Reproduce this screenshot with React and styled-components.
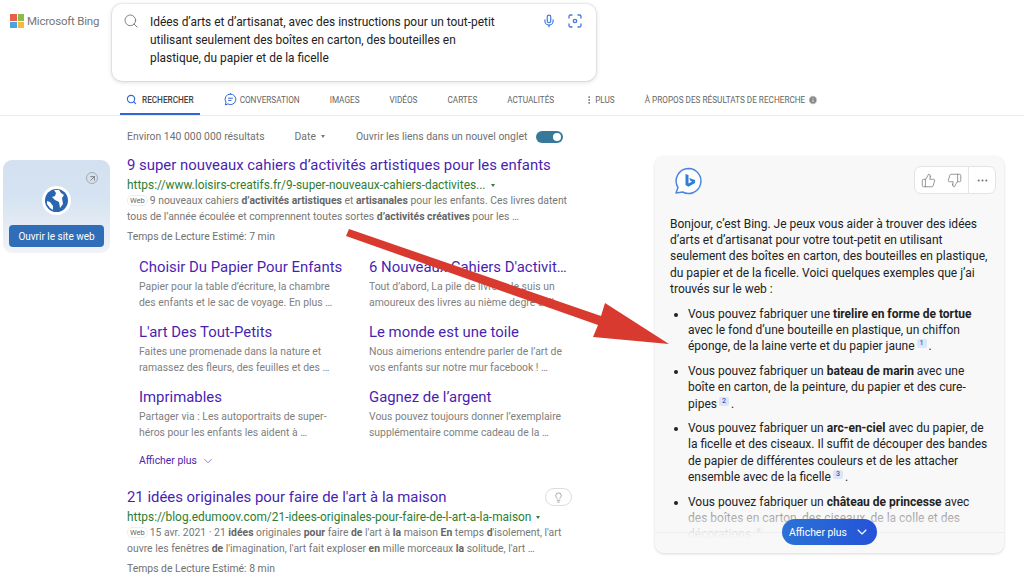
import React from "react";
import styled, { createGlobalStyle } from "styled-components";
import { Search, Mic, ThumbsUp, ThumbsDown, MoreHorizontal, ChevronDown, Lightbulb, Info, ArrowUpRight, MoreVertical } from "lucide-react";

const GlobalStyle = createGlobalStyle`
  html, body { margin: 0; padding: 0; background: #fff; }
  body { font-family: Roboto, "Liberation Sans", sans-serif; width: 1024px; height: 580px; overflow: hidden; }
  b { font-weight: 700; }
`;

const Page = styled.div`
  position: relative;
  width: 1024px;
  height: 580px;
  overflow: hidden;
`;

const Header = styled.header`
  height: 116px;
  box-sizing: border-box;
  border-bottom: 1px solid #ececec;
`;

const TopRow = styled.div`
  display: flex;
  align-items: flex-start;
  padding: 3px 0 0 10px;
`;

const Logo = styled.div`
  display: flex;
  align-items: center;
  gap: 3px;
  width: 102px;
  height: 36px;
  color: #767676;
  font-size: 11.5px;
  letter-spacing: -0.2px;
`;

const LogoGrid = styled.div`
  display: grid;
  grid-template-columns: 6.5px 6.5px;
  grid-template-rows: 6.5px 6.5px;
  gap: 1px;
`;

const LogoCell = styled.span`
  background: ${(p) => p.$color};
`;

const SearchBox = styled.div`
  width: 484px;
  height: 77px;
  margin-top: 1px;
  box-sizing: border-box;
  border-radius: 10px;
  background: #fff;
  box-shadow: 0 0 0 1px rgba(0, 0, 0, 0.05), 0 1px 5px rgba(0, 0, 0, 0.16);
  display: flex;
  padding: 9px 14px 0 11px;
  color: #777;
`;

const Query = styled.div`
  width: 350px;
  margin-left: 11px;
  font-size: 11.9px;
  line-height: 18px;
  color: #222;
`;

const QueryIcons = styled.div`
  display: flex;
  gap: 12px;
  margin-left: auto;
  color: #3f78e0;
  padding-top: 1px;
`;

const Nav = styled.nav`
  display: flex;
  align-items: stretch;
  height: 31px;
  margin-top: 3px;
  padding-left: 120px;
`;

const Tab = styled.div`
  display: flex;
  align-items: center;
  gap: ${(p) => p.$gap || 4}px;
  margin-left: ${(p) => p.$left || 0}px;
  padding: 0 ${(p) => (p.$active ? 6 : 0)}px;
  font-size: 8.2px;
  white-space: nowrap;
  color: ${(p) => (p.$active ? "#444" : "#666")};
  font-weight: ${(p) => (p.$active ? 500 : 400)};
  box-shadow: ${(p) => (p.$active ? "inset 0 -2px 0 #2f66d8" : "none")};
`;

const Body = styled.div`
  display: flex;
`;

const SideCard = styled.aside`
  width: 107px;
  height: 93px;
  margin: 44px 0 0 3px;
  box-sizing: border-box;
  border-radius: 9px;
  position: relative;
  padding-top: 26px;
  background: linear-gradient(#d2e0f0, #d6e3f2 40%, #f0f3f7);
  display: flex;
  flex: none;
  flex-direction: column;
  align-items: center;
`;

const CornerIcon = styled.span`
  position: absolute;
  top: 12px;
  right: 12px;
  width: 12px;
  height: 12px;
  border-radius: 50%;
  border: 1px solid #aaa;
  box-sizing: border-box;
  color: #666;
  display: flex;
  align-items: center;
  justify-content: center;
`;

const Globe = styled.div`
  width: 29px;
  height: 29px;
  border-radius: 50%;
  background: #fff;
  display: flex;
  align-items: center;
  justify-content: center;
`;

const OpenButton = styled.div`
  margin-top: 10px;
  width: 95px;
  height: 22px;
  background: #2f6db8;
  border-radius: 4px;
  color: #fff;
  font-size: 10px;
  display: flex;
  align-items: center;
  justify-content: center;
`;

const Main = styled.main`
  width: 528px;
  margin-left: 17px;
  flex: none;
`;

const Stats = styled.div`
  display: flex;
  align-items: center;
  height: 17px;
  margin-top: 12px;
  font-size: 10.4px;
  color: #707070;
`;

const StatItem = styled.span`
  margin-left: ${(p) => p.$left || 0}px;
`;

const Caret = styled.span`
  display: inline-block;
  margin-left: ${(p) => p.$left || 5}px;
  border-left: 2.5px solid transparent;
  border-right: 2.5px solid transparent;
  border-top: 3px solid ${(p) => p.$color || "#777"};
  vertical-align: middle;
`;

const Toggle = styled.span`
  width: 27px;
  height: 12px;
  margin-left: 9px;
  border-radius: 6px;
  background: #38799b;
  display: flex;
  justify-content: flex-end;
  align-items: center;
  padding-right: 2px;
  box-sizing: border-box;
  &::after {
    content: "";
    width: 8px;
    height: 8px;
    border-radius: 50%;
    background: #fff;
  }
`;

const Result = styled.section`
  margin-top: ${(p) => p.$top}px;
  width: 445px;
  position: relative;
`;

const Title = styled.div`
  font-size: 14.9px;
  line-height: 20px;
  margin-bottom: 2px;
  color: #4a1fb0;
  white-space: nowrap;
`;

const Url = styled.div`
  font-size: 11.9px;
  line-height: 16px;
  color: #2f7d32;
  white-space: nowrap;
`;

const Snippet = styled.div`
  font-size: 10.4px;
  line-height: 16px;
  color: #777;
  white-space: nowrap;
  b { color: #666; }
`;

const WebTag = styled.span`
  display: inline-block;
  font-size: 7.5px;
  line-height: 9px;
  padding: 0 2px;
  margin-right: 2px;
  color: #666;
  border: 1px solid #eee;
  border-radius: 5px;
  vertical-align: 1px;
`;

const ReadTime = styled.div`
  font-size: 10.4px;
  line-height: 20px;
  margin-top: 2px;
  color: #717171;
`;

const SubGrid = styled.div`
  display: grid;
  grid-template-columns: 230px 210px;
  grid-auto-rows: 65px;
  margin: 10px 0 0 12px;
`;

const SubTitle = styled.div`
  font-size: 14.9px;
  line-height: 20px;
  color: #4a1fb0;
  white-space: nowrap;
`;

const SubText = styled.div`
  font-size: 10.4px;
  line-height: 16px;
  margin-top: 2px;
  color: #808080;
  white-space: pre;
`;

const MoreLink = styled.div`
  margin: -1px 0 0 12px;
  font-size: 10.4px;
  line-height: 20px;
  display: flex;
  align-items: center;
  gap: 4px;
  color: #4a1fb0;
  svg { color: #7a78c4; }
`;

const BulbPill = styled.span`
  position: absolute;
  top: 1px;
  right: 0;
  width: 27px;
  height: 18px;
  border: 1px solid #ddd;
  border-radius: 9px;
  box-sizing: border-box;
  color: #777;
  display: flex;
  align-items: center;
  justify-content: center;
`;

const ChatPanel = styled.aside`
  position: relative;
  flex: none;
  width: 349px;
  height: 397px;
  margin: 40px 0 0 0;
  box-sizing: border-box;
  padding: 10px 15px 0;
  background: #f8f8f8;
  border-radius: 9px;
  box-shadow: 0 1px 3px rgba(0, 0, 0, 0.16);
  overflow: hidden;
`;

const ChatTop = styled.div`
  display: flex;
  justify-content: space-between;
  align-items: flex-start;
`;

const BingSlot = styled.div`
  margin-left: 3px;
  height: 30px;
`;

const Feedback = styled.div`
  display: flex;
  align-items: center;
  width: 82px;
  height: 28px;
  margin-right: -7px;
  box-sizing: border-box;
  border: 1px solid #e4e4e4;
  border-radius: 7px;
  background: #fff;
  color: #777;
`;

const FeedbackPart = styled.div`
  display: flex;
  align-items: center;
  justify-content: center;
  gap: 11px;
  height: 100%;
  flex: ${(p) => (p.$line ? 1 : "none")};
  width: ${(p) => (p.$line ? "auto" : "53px")};
  border-left: ${(p) => (p.$line ? "1px solid #e4e4e4" : "none")};
`;

const ChatBody = styled.div`
  margin-top: 20px;
  font-size: 12px;
  line-height: 16.2px;
  color: #222;
`;

const Bullets = styled.ul`
  margin: 9px 0 0;
  padding: 0 0 0 18px;
`;

const Bullet = styled.li`
  margin-bottom: 8.5px;
`;

const Ref = styled.sup`
  display: inline-block;
  font-size: 7px;
  font-weight: 500;
  line-height: 9px;
  padding: 0 3px;
  margin: 0 2px;
  color: #2f5fc0;
  background: #dde6f7;
  border-radius: 2px;
  vertical-align: 5px;
`;

const Fade = styled.div`
  position: absolute;
  left: 0;
  right: 0;
  bottom: 0;
  height: 46px;
  background: linear-gradient(rgba(248, 248, 248, 0.45), rgba(248, 248, 248, 0.9) 55%, #f8f8f8 70%);
  &::after {
    content: "";
    position: absolute;
    left: 0;
    right: 0;
    top: 25px;
    border-top: 1px solid #eee;
  }
`;

const ShowMore = styled.div`
  position: absolute;
  z-index: 1;
  left: 127px;
  bottom: 8px;
  width: 95px;
  height: 26px;
  border-radius: 13px;
  background: linear-gradient(90deg, #2c72d6, #2453d8);
  color: #fff;
  font-size: 10.4px;
  display: flex;
  align-items: center;
  justify-content: center;
  gap: 7px;
`;

const ArrowLayer = styled.svg`
  position: absolute;
  left: 0;
  top: 0;
  pointer-events: none;
`;

const subLinks = [
  ["Choisir Du Papier Pour Enfants", "Papier pour la table d’écriture, la chambre\ndes enfants et le sac de voyage. En plus …"],
  ["6 Nouveaux Cahiers D'activit…", "Tout d’abord, La pile de livres. Je suis un\namoureux des livres au nième degré et j’…"],
  ["L'art Des Tout-Petits", "Faites une promenade dans la nature et\nramassez des fleurs, des feuilles et des …"],
  ["Le monde est une toile", "Nous aimerions entendre parler de l’art de\nvos enfants sur notre mur facebook ! …"],
  ["Imprimables", "Partager via : Les autoportraits de super-\nhéros pour les enfants les aident à …"],
  ["Gagnez de l’argent", "Vous pouvez toujours donner l’exemplaire\nsupplémentaire comme cadeau de la …"],
];

const logoColors = ["#e8604a", "#8dbb4a", "#4aa3e0", "#f2bb3d"];

function ScanIcon() {
  return (
    <svg width="14" height="14" viewBox="0 0 14 14" fill="none" stroke="currentColor" strokeWidth="1.3" strokeLinecap="round">
      <path d="M1 4V2.500A1.500 1.500 0 0 1 2.500 1H4M10 1h1.500A1.500 1.500 0 0 1 13 2.500V4M13 10v1.500a1.500 1.500 0 0 1-1.500 1.500H10M4 13H2.500A1.500 1.500 0 0 1 1 11.500V10" />
      <circle cx="7" cy="7" r="1.700" />
    </svg>
  );
}

function ChatIcon() {
  return (
    <svg width="13" height="13" viewBox="0 0 13 13" fill="none" stroke="#2f66d8" strokeWidth="1" strokeLinecap="round">
      <path d="M6.500 1a5.300 5.300 0 1 1-2.600 9.900L1.300 12l.7-2.700A5.300 5.300 0 0 1 6.500 1z" />
      <path d="M4.500 5.200h4M4.500 7.400h2.600" />
    </svg>
  );
}

function BingMark() {
  return (
    <svg width="30" height="30" viewBox="0 0 30 30" fill="none">
      <path d="M15.500 2.500a12.500 12.500 0 1 1-6 23.500l-6.500 1 2-5.500A12.500 12.500 0 0 1 15.500 2.500z" fill="#fff" stroke="#4a86e0" strokeWidth="1.500" strokeLinejoin="round" />
      <path d="M12.500 8l3 1v8.500l3.500-2-1.800-.9-1-2.600 5.800 2.100v2.900l-6.500 3.800-3-1.800z" fill="#2f7fd8" />
    </svg>
  );
}

function GlobeIcon() {
  return (
    <svg width="23" height="23" viewBox="0 0 23 23">
      <circle cx="11.500" cy="11.500" r="11.500" fill="#2a66b0" />
      <path d="M9 1l5 0 2 3 3 2-2 3 1 6-3 4-1-6-4-2-3-3 3-1 1-3zM2 12l3 1 3 4 0 4-3-2-3-4z" fill="#fff" />
    </svg>
  );
}

export default function App() {
  return (
    <Page>
      <GlobalStyle />
      <Header>
        <TopRow>
          <Logo>
            <LogoGrid>
              {logoColors.map((c) => (
                <LogoCell key={c} $color={c} />
              ))}
            </LogoGrid>
            Microsoft Bing
          </Logo>
          <SearchBox>
            <Search size={16} strokeWidth={1.4} />
            <Query>
              Idées d’arts et d’artisanat, avec des instructions pour un tout-petit utilisant seulement des boîtes en carton, des bouteilles en plastique, du papier et de la ficelle
            </Query>
            <QueryIcons>
              <Mic size={14} />
              <ScanIcon />
            </QueryIcons>
          </SearchBox>
        </TopRow>
        <Nav>
          <Tab $active $gap={5}>
            <Search size={11} color="#2f66d8" strokeWidth={2.4} />
            RECHERCHER
          </Tab>
          <Tab $left={24} $gap={3}>
            <ChatIcon />
            CONVERSATION
          </Tab>
          <Tab $left={30}>IMAGES</Tab>
          <Tab $left={30}>VIDÉOS</Tab>
          <Tab $left={30}>CARTES</Tab>
          <Tab $left={30}>ACTUALITÉS</Tab>
          <Tab $left={30} $gap={1}>
            <MoreVertical size={10} />
            PLUS
          </Tab>
          <Tab $left={30} $gap={3}>
            À PROPOS DES RÉSULTATS DE RECHERCHE
            <Info size={10} fill="#888" color="#fff" />
          </Tab>
        </Nav>
      </Header>
      <Body>
        <SideCard>
          <CornerIcon>
            <ArrowUpRight size={9} />
          </CornerIcon>
          <Globe>
            <GlobeIcon />
          </Globe>
          <OpenButton>Ouvrir le site web</OpenButton>
        </SideCard>
        <Main>
          <Stats>
            Environ 140 000 000 résultats
            <StatItem $left={30}>Date</StatItem>
            <Caret />
            <StatItem $left={31}>Ouvrir les liens dans un nouvel onglet</StatItem>
            <Toggle />
          </Stats>
          <Result $top={10}>
            <Title>9 super nouveaux cahiers d’activités artistiques pour les enfants</Title>
            <Url>
              https://www.loisirs-creatifs.fr/9-super-nouveaux-cahiers-dactivites...
              <Caret $color="#2f7d32" />
            </Url>
            <Snippet>
              <WebTag>Web</WebTag>9 nouveaux cahiers <b>d’activités artistiques</b> et <b>artisanales</b> pour les enfants. Ces livres datent
            </Snippet>
            <Snippet>
              tous de l’année écoulée et comprennent toutes sortes <b>d’activités créatives</b> pour les …
            </Snippet>
            <ReadTime>Temps de Lecture Estimé: 7 min</ReadTime>
            <SubGrid>
              {subLinks.map(([title, text]) => (
                <div key={title}>
                  <SubTitle>{title}</SubTitle>
                  <SubText>{text}</SubText>
                </div>
              ))}
            </SubGrid>
            <MoreLink>
              Afficher plus
              <ChevronDown size={14} strokeWidth={1.5} />
            </MoreLink>
          </Result>
          <Result $top={16}>
            <Title>21 idées originales pour faire de l'art à la maison</Title>
            <BulbPill>
              <Lightbulb size={11} strokeWidth={1.4} />
            </BulbPill>
            <Url>
              https://blog.edumoov.com/21-idees-originales-pour-faire-de-l-art-a-la-maison
              <Caret $color="#2f7d32" />
            </Url>
            <Snippet>
              <WebTag>Web</WebTag>15 avr. 2021 · 21 <b>idées</b> originales <b>pour</b> faire <b>de</b> l'art à <b>la</b> maison <b>En</b> temps <b>d</b>'isolement, l'art
            </Snippet>
            <Snippet>
              ouvre les fenêtres <b>de</b> l'imagination, l'art fait exploser <b>en</b> mille morceaux <b>la</b> solitude, l'art …
            </Snippet>
            <ReadTime>Temps de Lecture Estimé: 8 min</ReadTime>
          </Result>
        </Main>
        <ChatPanel>
          <ChatTop>
            <BingSlot>
              <BingMark />
            </BingSlot>
            <Feedback>
              <FeedbackPart>
                <ThumbsUp size={15} strokeWidth={1.2} />
                <ThumbsDown size={15} strokeWidth={1.2} />
              </FeedbackPart>
              <FeedbackPart $line>
                <MoreHorizontal size={13} />
              </FeedbackPart>
            </Feedback>
          </ChatTop>
          <ChatBody>
            Bonjour, c’est Bing. Je peux vous aider à trouver des idées d’arts et d’artisanat pour votre tout-petit en utilisant seulement des boîtes en carton, des bouteilles en plastique, du papier et de la ficelle. Voici quelques exemples que j’ai trouvés sur le web :
            <Bullets>
              <Bullet>
                Vous pouvez fabriquer une <b>tirelire en forme de tortue</b> avec le fond d’une bouteille en plastique, un chiffon éponge, de la laine verte et du papier jaune<Ref>1</Ref>.
              </Bullet>
              <Bullet>
                Vous pouvez fabriquer un <b>bateau de marin</b> avec une boîte en carton, de la peinture, du papier et des cure-pipes<Ref>2</Ref>.
              </Bullet>
              <Bullet>
                Vous pouvez fabriquer un <b>arc-en-ciel</b> avec du papier, de la ficelle et des ciseaux. Il suffit de découper des bandes de papier de différentes couleurs et de les attacher ensemble avec de la ficelle<Ref>3</Ref>.
              </Bullet>
              <Bullet>
                Vous pouvez fabriquer un <b>château de princesse</b> avec des boîtes en carton, des ciseaux, de la colle et des décorations<Ref>4</Ref>
              </Bullet>
            </Bullets>
          </ChatBody>
          <Fade />
          <ShowMore>
            Afficher plus
            <ChevronDown size={16} strokeWidth={1.6} />
          </ShowMore>
        </ChatPanel>
      </Body>
      <ArrowLayer width="1024" height="580" viewBox="0 0 1024 580">
        <path d="M349 229 L601 316 L605 303 L669 344 L593 337 L598 325 L346 236 Z" fill="#d93a30" />
      </ArrowLayer>
    </Page>
  );
}
